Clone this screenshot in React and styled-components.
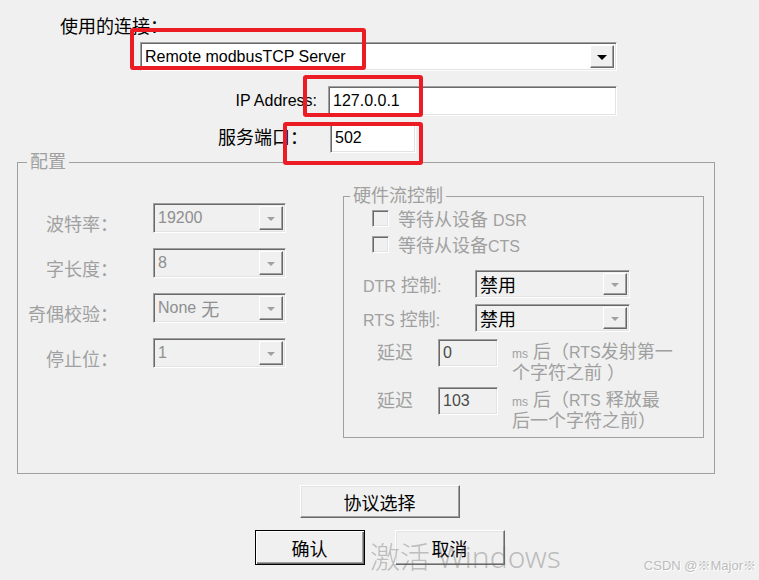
import React from 'react';
import styled, { createGlobalStyle, css } from 'styled-components';

const GlobalStyle = createGlobalStyle`
  html, body {
    margin: 0;
    padding: 0;
    background: #f0f0f0;
  }
  body {
    font-family: "Liberation Sans", "Noto Sans CJK SC", sans-serif;
    font-size: 16px;
    color: #000;
  }
  * {
    box-sizing: border-box;
  }
`;

// classic win32 sunken edge (combo boxes, edits, check boxes)
const sunken = css`
  border: 1px solid;
  border-color: #a0a0a0 #ffffff #ffffff #a0a0a0;
  box-shadow: inset 1px 1px 0 #696969, inset -1px -1px 0 #e3e3e3;
`;

const Dialog = styled.div`
  position: relative;
  width: 759px;
  height: 580px;
  overflow: hidden;
  padding-top: 17px;
`;

const Lat = styled.span`
  font-size: 16px;
`;

const Han = styled.span`
  font-size: 18px;
  margin-left: ${({ $gap }) => $gap || 0}px;
`;

const Small = styled.span`
  font-size: 12px;
`;

const ConnLabel = styled.div`
  margin-left: 60px;
  height: 20px;
  font-size: 18px;
  line-height: 20px;
`;

const ConnBlock = styled.div`
  margin: 5px 0 0 140px;
`;

const FieldRow = styled.div`
  display: flex;
  align-items: center;
  margin-top: ${({ $top }) => $top}px;
`;

const FieldLabel = styled.div`
  width: ${({ $w }) => $w}px;
  margin-right: ${({ $gap }) => $gap}px;
  text-align: right;
  font-size: ${({ $size }) => $size || 16}px;
  line-height: 30px;
`;

const EditBox = styled.div`
  ${sunken};
  width: ${({ $w }) => $w}px;
  height: ${({ $h }) => $h || 30}px;
  padding: 0 4px;
  display: flex;
  align-items: center;
  background: ${({ $disabled }) => ($disabled ? '#f0f0f0' : '#ffffff')};
  color: ${({ $disabled }) => ($disabled ? '#4a4a4a' : '#000')};
  font-size: 16px;
`;

const ComboFrame = styled.div`
  ${sunken};
  width: ${({ $w }) => $w}px;
  height: ${({ $h }) => $h}px;
  padding: 2px;
  display: flex;
  align-items: stretch;
  background: ${({ $bg }) => $bg};
`;

const ComboValue = styled.div`
  flex: 1;
  display: flex;
  align-items: center;
  padding-left: 2px;
  font-size: 16px;
  color: ${({ $color }) => $color};
  white-space: nowrap;
`;

const DropButton = styled.div`
  width: 24px;
  display: flex;
  align-items: center;
  justify-content: center;
  background: #f0f0f0;
  border: 1px solid;
  border-color: #ffffff #696969 #696969 #ffffff;
  box-shadow: inset -1px -1px 0 #a0a0a0;
`;

const Arrow = styled.span`
  width: 0;
  height: 0;
  border-left: ${({ $dim }) => ($dim ? 4 : 5)}px solid transparent;
  border-right: ${({ $dim }) => ($dim ? 4 : 5)}px solid transparent;
  border-top: ${({ $dim }) => ($dim ? 4 : 5)}px solid
    ${({ $dim }) => ($dim ? '#a0a0a0' : '#000')};
  margin-top: 1px;
`;

const Combo = ({ w, h = 30, value, disabled, textColor }) => (
  <ComboFrame $w={w} $h={h} $bg={disabled ? '#f0f0f0' : '#ffffff'}>
    <ComboValue $color={textColor || (disabled ? '#8f8f8f' : '#000')}>
      {value}
    </ComboValue>
    <DropButton>
      <Arrow $dim={disabled} />
    </DropButton>
  </ComboFrame>
);

const GroupBox = styled.fieldset`
  margin: 0;
  padding: 0;
  min-inline-size: 0;
  border: 1px solid #a0a0a0;
`;

const GroupTitle = styled.legend`
  margin-left: ${({ $indent }) => $indent}px;
  padding: 0 3px;
  font-size: 18px;
  line-height: ${({ $lh }) => $lh}px;
  color: #a0a0a0;
`;

const ConfigGroup = styled(GroupBox)`
  margin-left: 17px;
  width: 698px;
  padding-bottom: 35px;
`;

const ConfigBody = styled.div`
  display: grid;
  grid-template-columns: 325px 361px;
  align-items: start;
`;

const SerialGrid = styled.div`
  display: grid;
  grid-template-columns: 100px 133px;
  column-gap: 35px;
  row-gap: 15px;
  padding-top: 32px;
`;

const DimLabel = styled.div`
  padding-top: 7px;
  font-size: 18px;
  line-height: 30px;
  height: 30px;
  color: #a0a0a0;
  text-align: right;
  white-space: nowrap;
`;

const HwGroup = styled(GroupBox)`
  margin-top: 14px;
  width: 361px;
  padding-bottom: 6px;
`;

const CheckRow = styled.div`
  display: flex;
  align-items: center;
  height: 26px;
  padding-left: 28px;
  margin-top: ${({ $top }) => $top || 0}px;
`;

const CheckBox = styled.span`
  ${sunken};
  width: 17px;
  height: 17px;
  background: #f0f0f0;
`;

const CheckText = styled.span`
  margin-left: 9px;
  font-size: 18px;
  color: #a0a0a0;
`;

const CtrlRow = styled.div`
  display: flex;
  align-items: center;
  padding-left: 19px;
  margin-top: ${({ $top }) => $top}px;
`;

const CtrlLabel = styled.div`
  width: 112px;
  font-size: 18px;
  color: #a0a0a0;
  white-space: nowrap;
`;

const DelayRow = styled.div`
  display: flex;
  align-items: flex-start;
  padding-left: 33px;
  margin-top: ${({ $top }) => $top}px;
`;

const DelayLabel = styled.div`
  width: 61px;
  font-size: 18px;
  line-height: 28px;
  color: #a0a0a0;
`;

const DelayNote = styled.div`
  margin-left: 14px;
  padding-top: 4px;
  font-size: 18px;
  line-height: 19px;
  color: #a0a0a0;
  white-space: nowrap;
`;

const ButtonRow = styled.div`
  display: flex;
  justify-content: center;
  gap: 30px;
  margin-top: ${({ $top }) => $top}px;
`;

const PushButton = styled.button`
  width: ${({ $w }) => $w}px;
  height: ${({ $h }) => $h}px;
  padding: 0;
  font-family: inherit;
  font-size: 18px;
  color: #000;
  background: #f0f0f0;
  border: 1px solid;
  border-color: #ffffff #696969 #696969 #ffffff;
  box-shadow: inset -1px -1px 0 #a0a0a0, inset 1px 1px 0 #e3e3e3;
  ${({ $default }) =>
    $default &&
    css`
      border: 1px solid #000;
      box-shadow: inset 1px 1px 0 #ffffff, inset -1px -1px 0 #696969,
        inset -2px -2px 0 #a0a0a0;
    `}
`;

// red annotation frames drawn over the dialog
const RedMark = styled.div`
  position: absolute;
  left: ${({ $x }) => $x}px;
  top: ${({ $y }) => $y}px;
  width: ${({ $w }) => $w}px;
  height: ${({ $h }) => $h}px;
  border: 4px solid #ec1c24;
  border-radius: 3px;
  pointer-events: none;
`;

const Watermark = styled.div`
  position: absolute;
  left: 370px;
  top: 542px;
  font-family: "Noto Sans", "Noto Sans CJK SC", sans-serif;
  font-size: 30px;
  font-weight: 300;
  line-height: 30px;
  color: rgba(105, 105, 105, 0.4);
  white-space: nowrap;
  pointer-events: none;
`;

const Credit = styled.div`
  position: absolute;
  right: 3px;
  bottom: 6px;
  font-size: 13px;
  color: #bcbcbc;
  text-shadow: 1px 1px 0 #ffffff;
  white-space: nowrap;
`;

const serialFields = [
  { label: '波特率：', value: '19200' },
  { label: '字长度：', value: '8' },
  { label: '奇偶校验：', value: <>None<Han $gap={5}>无</Han></> },
  { label: '停止位：', value: '1' },
];

const marks = [
  { x: 130, y: 28, w: 236, h: 42 },
  { x: 303, y: 75, w: 120, h: 42 },
  { x: 283, y: 122, w: 140, h: 43 },
];

export default function App() {
  return (
    <>
      <GlobalStyle />
      <Dialog>
        <ConnLabel>使用的连接：</ConnLabel>
        <ConnBlock>
          <Combo w={477} h={29} value="Remote modbusTCP Server" />
        </ConnBlock>

        <FieldRow $top={15}>
          <FieldLabel $w={317} $gap={11}>IP Address:</FieldLabel>
          <EditBox $w={289}>127.0.0.1</EditBox>
        </FieldRow>
        <FieldRow $top={7}>
          <FieldLabel $w={308} $gap={22} $size={18}>服务端口：</FieldLabel>
          <EditBox $w={86}>502</EditBox>
        </FieldRow>

        <ConfigGroup>
          <GroupTitle $indent={9} $lh={18}>配置</GroupTitle>
          <ConfigBody>
            <SerialGrid>
              {serialFields.map((f) => (
                <React.Fragment key={f.label}>
                  <DimLabel>{f.label}</DimLabel>
                  <Combo w={133} value={f.value} disabled />
                </React.Fragment>
              ))}
            </SerialGrid>

            <HwGroup>
              <GroupTitle $indent={6} $lh={22}>硬件流控制</GroupTitle>
              <CheckRow $top={-2}>
                <CheckBox />
                <CheckText>
                  等待从设备 <Lat>DSR</Lat>
                </CheckText>
              </CheckRow>
              <CheckRow>
                <CheckBox />
                <CheckText>
                  等待从设备<Lat>CTS</Lat>
                </CheckText>
              </CheckRow>

              <CtrlRow $top={13}>
                <CtrlLabel>
                  <Lat>DTR</Lat> 控制<Lat>:</Lat>
                </CtrlLabel>
                <Combo
                  w={155}
                  h={28}
                  value={<Han>禁用</Han>}
                  disabled
                  textColor="#000"
                />
              </CtrlRow>
              <CtrlRow $top={6}>
                <CtrlLabel>
                  <Lat>RTS</Lat> 控制<Lat>:</Lat>
                </CtrlLabel>
                <Combo
                  w={155}
                  h={28}
                  value={<Han>禁用</Han>}
                  disabled
                  textColor="#000"
                />
              </CtrlRow>

              <DelayRow $top={7}>
                <DelayLabel>延迟</DelayLabel>
                <EditBox $w={60} $h={28} $disabled>
                  0
                </EditBox>
                <DelayNote>
                  <Small>ms</Small> 后（<Lat>RTS</Lat>发射第一
                  <br />
                  个字符之前 ）
                </DelayNote>
              </DelayRow>
              <DelayRow $top={4}>
                <DelayLabel>延迟</DelayLabel>
                <EditBox $w={60} $h={28} $disabled>
                  103
                </EditBox>
                <DelayNote>
                  <Small>ms</Small> 后（<Lat>RTS</Lat> 释放最
                  <br />
                  后一个字符之前）
                </DelayNote>
              </DelayRow>
            </HwGroup>
          </ConfigBody>
        </ConfigGroup>

        <ButtonRow $top={11}>
          <PushButton $w={160} $h={33}>协议选择</PushButton>
        </ButtonRow>
        <ButtonRow $top={12}>
          <PushButton $w={110} $h={35} $default>
            确认
          </PushButton>
          <PushButton $w={110} $h={35}>取消</PushButton>
        </ButtonRow>

        {marks.map((m, i) => (
          <RedMark key={i} $x={m.x} $y={m.y} $w={m.w} $h={m.h} />
        ))}

        <Watermark>激活 Windows</Watermark>
        <Credit>CSDN @※Major※</Credit>
      </Dialog>
    </>
  );
}
